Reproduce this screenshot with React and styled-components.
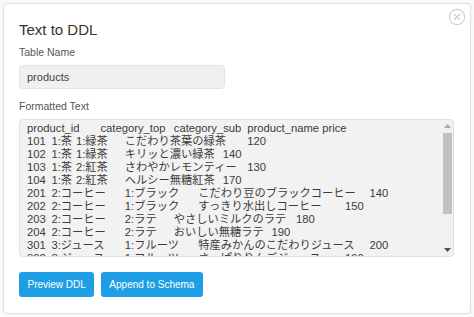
import React from "react";
import styled, { createGlobalStyle } from "styled-components";

const GlobalStyle = createGlobalStyle`
  html, body { margin: 0; padding: 0; background: #ffffff; }
  body { font-family: "Liberation Sans", Arial, "Noto Sans CJK JP", sans-serif; }
  * { box-sizing: border-box; }
`;

const Page = styled.div`
  width: 474px;
  height: 317px;
  padding: 3px;
  background: #fafafa;
`;

const Modal = styled.div`
  position: relative;
  width: 468px;
  height: 311px;
  background: #fff;
  border: 1px solid #e2e2e2;
  border-radius: 4px;
  box-shadow: 0 0 2px rgba(0, 0, 0, 0.08);
  padding: 17px 16px 16px 15px;
  display: flex;
  flex-direction: column;
`;

const CloseButton = styled.button`
  position: absolute;
  top: 4px;
  right: 4px;
  width: 18px;
  height: 18px;
  padding: 0;
  border: none;
  background: transparent;
  display: flex;
  align-items: center;
  justify-content: center;
  cursor: pointer;
`;

const Title = styled.h2`
  margin: 0;
  font-size: 15px;
  line-height: 18px;
  font-weight: normal;
  color: #333;
`;

const Field = styled.div`
  margin-top: ${(p) => p.$top}px;
`;

const Label = styled.label`
  display: block;
  font-size: 10.5px;
  line-height: 14px;
  color: #555;
  margin-bottom: 6px;
`;

const TextInput = styled.input`
  display: block;
  width: 206px;
  height: 24px;
  margin: 0;
  padding: 0 7px;
  background: #f0f0f0;
  border: 1px solid #e3e3e3;
  border-radius: 4px;
  font-family: "Liberation Sans", Arial, sans-serif;
  font-size: 11px;
  color: #444;
  outline: none;
`;

const TextBox = styled.div`
  width: 435px;
  height: 138px;
  display: flex;
  background: #f2f2f2;
  border: 1px solid #e0e0e0;
  border-radius: 4px;
  overflow: hidden;
`;

const TextArea = styled.textarea`
  flex: 1;
  margin: 0;
  padding: 2px 7px;
  border: none;
  background: transparent;
  resize: none;
  overflow: hidden;
  white-space: pre;
  tab-size: 24.46px;
  font-family: "Liberation Sans", Arial, "Noto Sans CJK JP", sans-serif;
  font-size: 11.25px;
  line-height: 13px;
  color: #3c3c3c;
  outline: none;
`;

const ScrollBar = styled.div`
  width: 11px;
  display: flex;
  flex-direction: column;
  background: #f1f1f1;
`;

const ScrollArrow = styled.div`
  height: 12px;
  display: flex;
  align-items: center;
  justify-content: center;
`;

const ScrollTrack = styled.div`
  flex: 1;
  padding: 1px 1px 0;
`;

const ScrollThumb = styled.div`
  height: 81px;
  background: #c1c1c1;
`;

const ButtonRow = styled.div`
  display: flex;
  gap: 6.5px;
  margin-top: 15px;
`;

const Button = styled.button`
  height: 25px;
  padding: 0 8.5px;
  border: none;
  border-radius: 3px;
  background: #1e9fe5;
  color: #fff;
  font-family: "Liberation Sans", Arial, sans-serif;
  font-size: 10px;
  cursor: pointer;
`;

const header = "product_id\tcategory_top\tcategory_sub\tproduct_name price";

const rows = [
  ["101", "1:茶", "1:緑茶", "こだわり茶葉の緑茶", "120"],
  ["102", "1:茶", "1:緑茶", "キリッと濃い緑茶", "140"],
  ["103", "1:茶", "2:紅茶", "さわやかレモンティー", "130"],
  ["104", "1:茶", "2:紅茶", "ヘルシー無糖紅茶", "170"],
  ["201", "2:コーヒー", "1:ブラック", "こだわり豆のブラックコーヒー", "140"],
  ["202", "2:コーヒー", "1:ブラック", "すっきり水出しコーヒー", "150"],
  ["203", "2:コーヒー", "2:ラテ", "やさしいミルクのラテ", "180"],
  ["204", "2:コーヒー", "2:ラテ", "おいしい無糖ラテ", "190"],
  ["301", "3:ジュース", "1:フルーツ", "特産みかんのこだわりジュース", "200"],
  ["302", "3:ジュース", "1:フルーツ", "さっぱりりんごジュース", "190"],
  ["303", "3:ジュース", "2:野菜", "緑黄色野菜のジュース", "160"],
  ["304", "3:ジュース", "2:野菜", "トマトジュース", "150"],
  ["401", "4:水", "1:天然水", "南アルプスの天然水", "100"],
  ["402", "4:水", "2:炭酸水", "強炭酸水", "110"],
];

const text = [header, ...rows.map((r) => r.join("\t"))].join("\n");

function CloseIcon() {
  return (
    <svg width="18" height="18" viewBox="0 0 18 18" fill="none">
      <circle cx="9" cy="9" r="7.6" stroke="#cfcfcf" strokeWidth="1.1" />
      <path d="M6.3 6.3 L11.7 11.7 M11.7 6.3 L6.3 11.7" stroke="#c4c4c4" strokeWidth="1.2" strokeLinecap="round" />
    </svg>
  );
}

function Arrow({ up, color }) {
  return (
    <svg width="7" height="4" viewBox="0 0 7 4">
      {up ? <path d="M0 4 L3.5 0 L7 4 Z" fill={color} /> : <path d="M0 0 L7 0 L3.5 4 Z" fill={color} />}
    </svg>
  );
}

export default function App() {
  return (
    <>
      <GlobalStyle />
      <Page>
        <Modal>
          <CloseButton aria-label="Close">
            <CloseIcon />
          </CloseButton>
          <Title>Text to DDL</Title>
          <Field $top={6}>
            <Label>Table Name</Label>
            <TextInput defaultValue="products" />
          </Field>
          <Field $top={10}>
            <Label>Formatted Text</Label>
            <TextBox>
              <TextArea readOnly value={text} />
              <ScrollBar>
                <ScrollArrow>
                  <Arrow up color="#a8a8a8" />
                </ScrollArrow>
                <ScrollTrack>
                  <ScrollThumb />
                </ScrollTrack>
                <ScrollArrow>
                  <Arrow color="#505050" />
                </ScrollArrow>
              </ScrollBar>
            </TextBox>
          </Field>
          <ButtonRow>
            <Button>Preview DDL</Button>
            <Button>Append to Schema</Button>
          </ButtonRow>
        </Modal>
      </Page>
    </>
  );
}
